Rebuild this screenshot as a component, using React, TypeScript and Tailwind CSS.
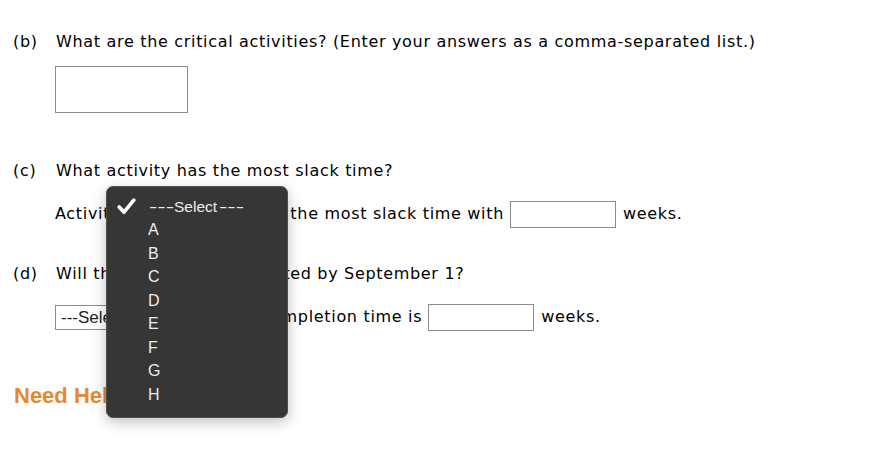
import React from "react";

const verdana = { fontFamily: '"DejaVu Sans", Verdana, sans-serif' };
const helv = { fontFamily: '"Liberation Sans", Arial, sans-serif' };

function Check() {
  return (
    <svg width="19" height="17" viewBox="0 0 19 17" className="block">
      <path d="M2.2 9 L7 14.2 L16.8 2.2" fill="none" stroke="#ffffff" strokeWidth="3.6" strokeLinecap="round" strokeLinejoin="round" />
    </svg>
  );
}

function Dashes() {
  return (
    <span className="inline-block shrink-0 w-[25px] whitespace-nowrap">
      <span className="inline-block origin-left scale-x-[1.62]">---</span>
    </span>
  );
}

function Menu() {
  const items = ["A", "B", "C", "D", "E", "F", "G", "H"];
  return (
    <div
      className="absolute left-[106px] top-[186px] w-[182px] h-[232px] rounded-[7px] bg-[#363636] border border-[#505050] shadow-[0_4px_14px_rgba(0,0,0,0.25)] pt-[8px]"
      style={helv}
    >
      <div className="flex items-center h-[23.5px] text-[15.5px] text-[#ededed]">
        <div className="w-[42px] pl-[10px]">
          <Check />
        </div>
        <span className="whitespace-nowrap">
          <Dashes />
          Select
          <span className="ml-[2px]">
            <Dashes />
          </span>
        </span>
      </div>
      {items.map((i) => (
        <div key={i} className="flex items-center h-[23.5px] text-[16px] text-[#ededed] pl-[41px]">
          {i}
        </div>
      ))}
    </div>
  );
}

export default function App() {
  return (
    <div className="relative w-[896px] h-[452px] bg-white text-black overflow-hidden" style={verdana}>
      <div className="pl-[13px] pt-[32px] text-[16px] leading-[20px] tracking-[0.68px]">
        <div className="flex">
          <span className="w-[43px]">(b)</span>
          <span>What are the critical activities? (Enter your answers as a comma-separated list.)</span>
        </div>
        <div className="ml-[42px] mt-[14px] w-[133px] h-[47px] border border-[#8a8a8a]" />

        <div className="flex mt-[48px]">
          <span className="w-[43px]">(c)</span>
          <span>What activity has the most slack time?</span>
        </div>
        <div className="flex items-center ml-[42px] mt-[20px] h-[26px]">
          <span>Activity</span>
          <div
            className="ml-[6px] w-[122px] h-[24px] border border-[#8a8a8a] text-[16px] tracking-normal flex items-center px-[4px]"
            style={helv}
          >
            ---Select---
          </div>
          <span className="ml-[6px]">has the most slack time with</span>
          <div className="ml-[6px] w-[106px] h-[27px] border border-[#8a8a8a]" />
          <span className="ml-[7px]">weeks.</span>
        </div>

        <div className="flex mt-[37px]">
          <span className="w-[43px]">(d)</span>
          <span>Will the project be completed by September 1?</span>
        </div>
        <div className="flex items-center ml-[42px] mt-[20px] h-[26px]">
          <div
            className="w-[97px] h-[25px] border border-[#8a8a8a] text-[17px] leading-[23px] tracking-normal text-[#222] px-[5px] whitespace-nowrap overflow-hidden"
            style={helv}
          >
            ---Select---
          </div>
          <span className="ml-[6px]">The project completion time is</span>
          <div className="ml-[6px] w-[106px] h-[27px] border border-[#8a8a8a]" />
          <span className="ml-[7px]">weeks.</span>
        </div>

        <div className="ml-[1px] mt-[54px] text-[22px] leading-[24px] tracking-normal font-bold text-[#e6892e]" style={helv}>
          Need Help?
        </div>
      </div>
      <Menu />
    </div>
  );
}
